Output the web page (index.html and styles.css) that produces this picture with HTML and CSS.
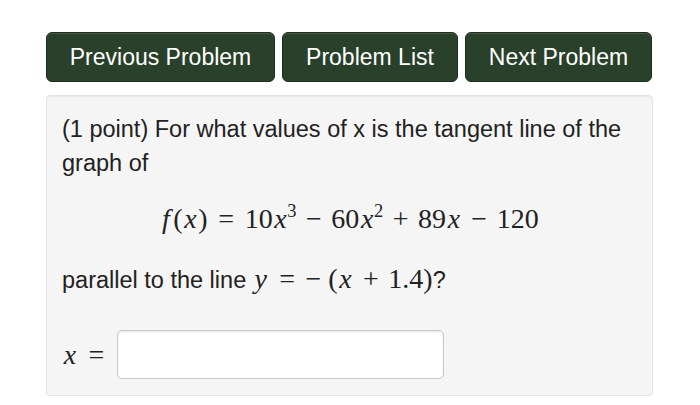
FILE: index.html
```html
<!DOCTYPE html>
<html>
	<head>
		<meta charset="utf-8" />
		<title>Problem</title>
		<link rel="stylesheet" href="styles.css">
	</head>
	<body>
		<div class="page">
			<div class="nav">
				<a class="nav-btn nav-prev" href="#">Previous Problem</a>
				<a class="nav-btn nav-list" href="#">Problem List</a>
				<a class="nav-btn nav-next" href="#">Next Problem</a>
			</div>
			<div class="problem">
				<p class="problem-text">(1 point) For what values of x is the tangent line of the graph of</p>
				<div class="math-display">
					<i class="fn">f</i>(<i>x</i>)<span class="rel">=</span>10<i class="base">x</i><sup>3</sup><span class="op">&minus;</span>60<i class="base">x</i><sup>2</sup><span class="op">+</span>89<i>x</i><span class="op">&minus;</span>120
				</div>
				<p class="problem-text">parallel to the line <span class="math"><i>y</i><span class="rel">=</span>&minus;<span class="sp"></span>(<i>x</i><span class="op">+</span>1.4)</span>?</p>
				<div class="answer">
					<span class="math"><i>x</i><span class="rel">=</span></span>
					<input class="answer-input" type="text" />
				</div>
			</div>
		</div>
	</body>
</html>
```

FILE: styles.css
```css
body{margin: 0px;padding: 0px;background: #fff;font-family: "Liberation Sans", Arial, sans-serif;color: #222;}
.page{width: 607px;margin-left: 46px;padding-top: 32px;}
.nav{display: flex;gap: 7px;}
.nav-btn{
	display: block;height: 48px;line-height: 48px;
	background: #29402a;border: 1px solid #1c2c1d;border-radius: 6px;
	color: #fff;font-size: 23px;text-align: center;text-decoration: none;
	box-shadow: inset 0 1px 0 rgba(255,255,255,0.12);
}
.nav-prev{width: 227px;}
.nav-list{width: 174px;}
.nav-next{width: 185px;}
.problem{
	margin-top: 13px;height: 267px;
	padding: 16px 15px 16px 15px;
	background: #f5f5f5;border: 1px solid #e3e3e3;border-radius: 4px;
	box-shadow: inset 0 1px 1px rgba(0,0,0,0.05), 0 1px 1px rgba(0,0,0,0.04);
}
.problem-text{margin: 0px;font-size: 23.5px;line-height: 34px;}
.math-display{
	text-align: center;margin: 22px 0px 26px 0px;
	font-family: "Liberation Serif", "Times New Roman", serif;font-size: 28px;line-height: 34px;
}
.math{font-family: "Liberation Serif", "Times New Roman", serif;font-size: 28px;}
.math-display i, .math i{margin: 0px 0.06em;}
.math-display .fn{margin-right: 0.12em;}
.math-display .base{margin-right: 0.02em;}
.rel{margin: 0px 0.38em;}
.op{margin: 0px 0.34em;}
.sp{display: inline-block;width: 0.25em;}
sup{font-size: 0.66em;vertical-align: 0.58em;line-height: 0;}
.answer{display: flex;align-items: center;gap: 13px;margin-top: 33px;}
.answer .rel{margin-right: 0px;}
.answer-input{
	width: 325px;height: 47px;margin: 0px;padding: 0px;
	border: 1px solid #c8c8c8;border-radius: 5px;background: #fff;
	box-shadow: inset 0 1px 2px rgba(0,0,0,0.1);outline: none;
}
```
